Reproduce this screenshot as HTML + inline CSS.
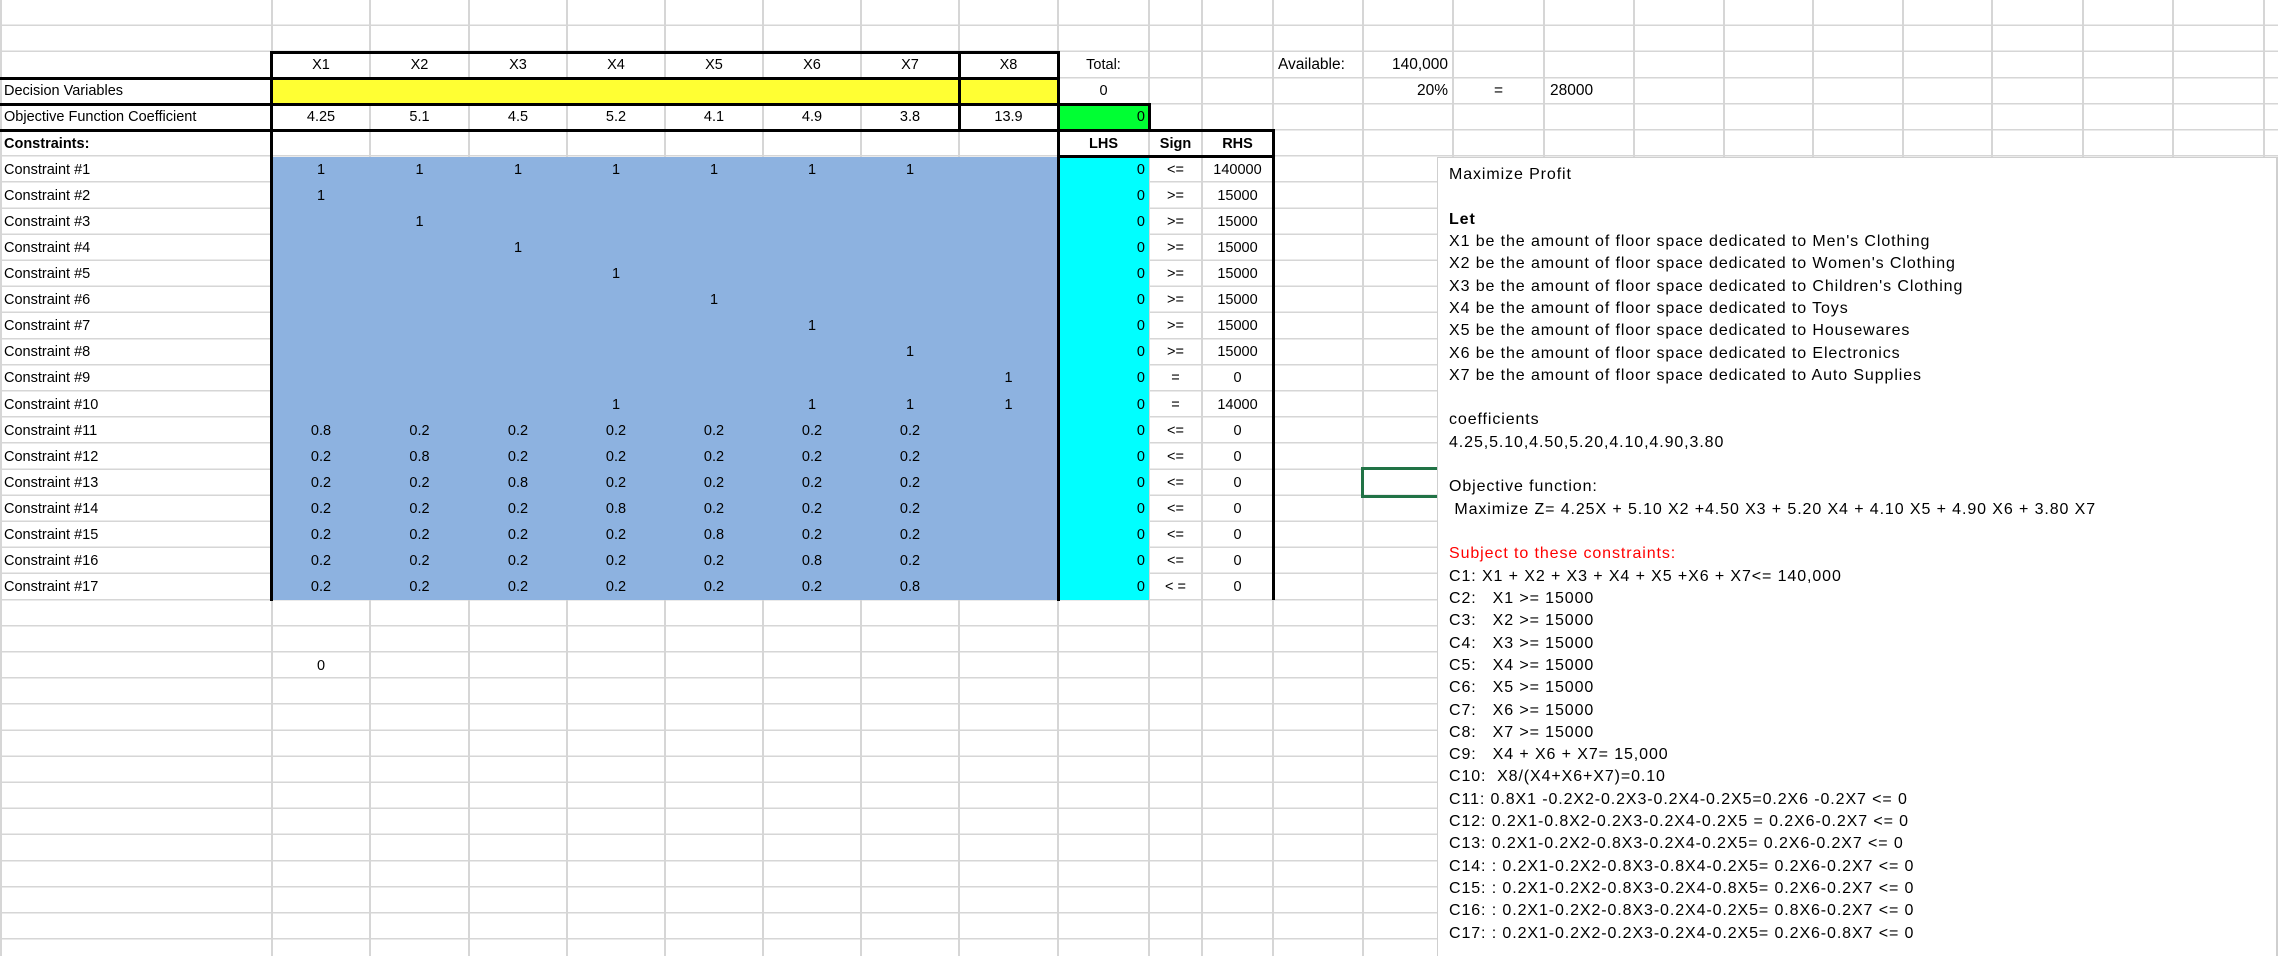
<!DOCTYPE html>
<html><head><meta charset="utf-8"><style>
*{margin:0;padding:0;box-sizing:border-box}
body{width:2278px;height:956px;position:relative;overflow:hidden;background:#fff;
background-image:repeating-linear-gradient(to bottom,transparent 0,transparent 24.6px,#d6d6d6 24.6px,#d6d6d6 26.1px);
font-family:"Liberation Sans",Arial,sans-serif;font-size:14.5px;color:#000}
.v{position:absolute;top:0;height:956px;width:2px;background:#d6d6d6}
.b{position:absolute;background:#000}
.blk{position:absolute}
.r{position:absolute;left:0;height:26.1px;display:flex;line-height:26.1px;white-space:nowrap}
.r span{display:block;text-align:center;overflow:visible}
.r span:nth-child(1){width:272px;text-align:left;padding-left:4px}
.r span:nth-child(2){width:98px}.r span:nth-child(3){width:99px}
.r span:nth-child(4){width:98px}.r span:nth-child(5){width:98px}
.r span:nth-child(6){width:98px}.r span:nth-child(7){width:98px}
.r span:nth-child(8){width:98px}.r span:nth-child(9){width:99px}
.r span:nth-child(10){width:91px;text-align:right;padding-right:4px}
.r span:nth-child(11){width:53px}.r span:nth-child(12){width:71px}
.t{position:absolute;font-size:15.5px;white-space:pre;line-height:26.1px}
#tb{position:absolute;left:1437px;top:157px;width:841px;height:799px;background:#fff;border-left:1.5px solid #cfcfcf;border-top:1.5px solid #cfcfcf;border-right:2px solid #cfcfcf}
#tx{position:absolute;left:11px;top:6px;font-size:16px;line-height:22.32px;white-space:pre;letter-spacing:0.9px}
</style></head><body>
<div class="v" style="left:0"></div>
<div class="v" style="left:271px"></div><div class="v" style="left:369px"></div><div class="v" style="left:468px"></div>
<div class="v" style="left:566px"></div><div class="v" style="left:664px"></div><div class="v" style="left:762px"></div>
<div class="v" style="left:860px"></div><div class="v" style="left:958px"></div><div class="v" style="left:1057px"></div>
<div class="v" style="left:1148px"></div><div class="v" style="left:1201px"></div><div class="v" style="left:1272px"></div>
<div class="v" style="left:1362px"></div><div class="v" style="left:1452px"></div><div class="v" style="left:1543px"></div>
<div class="v" style="left:1633px"></div><div class="v" style="left:1723px"></div><div class="v" style="left:1812px"></div>
<div class="v" style="left:1902px"></div><div class="v" style="left:1991px"></div><div class="v" style="left:2082px"></div>
<div class="v" style="left:2172px"></div><div class="v" style="left:2263px"></div>
<div style="position:absolute;left:2px;top:0;width:268px;height:52px;background:repeating-linear-gradient(to bottom,transparent 0,transparent 24.6px,#d6d6d6 24.6px,#d6d6d6 26.1px)"></div>

<div class="blk" style="left:272px;top:78px;width:786px;height:26px;background:#ffff33"></div>
<div class="blk" style="left:1058px;top:104px;width:91px;height:26px;background:#00ff33"></div>
<div class="blk" style="left:272px;top:156.6px;width:786px;height:443.7px;background:#8db2e0"></div>
<div class="blk" style="left:1058px;top:156.6px;width:91px;height:443.7px;background:#00ffff"></div>

<div class="b" style="left:270px;top:50.7px;width:789px;height:3px"></div>
<div class="b" style="left:0;top:76.8px;width:1059px;height:3px"></div>
<div class="b" style="left:0;top:102.9px;width:1150px;height:3px"></div>
<div class="b" style="left:0;top:129px;width:1275px;height:3px"></div>
<div class="b" style="left:1057px;top:155px;height:3px;width:217px"></div>
<div class="b" style="left:270px;top:50.7px;width:3px;height:550px"></div>
<div class="b" style="left:957.5px;top:50.7px;width:3px;height:81px"></div>
<div class="b" style="left:1056.5px;top:50.7px;width:3px;height:550px"></div>
<div class="b" style="left:1147.5px;top:102.9px;width:3px;height:29px"></div>
<div class="b" style="left:1271.5px;top:129px;width:3px;height:471px"></div>

<div class="r" style="top:52.2px"><span></span><span>X1</span><span>X2</span><span>X3</span><span>X4</span><span>X5</span><span>X6</span><span>X7</span><span>X8</span><span style="text-align:center;padding:0">Total:</span><span></span><span></span></div>
<div class="r" style="top:78.3px"><span>Decision Variables</span><span></span><span></span><span></span><span></span><span></span><span></span><span></span><span></span><span style="text-align:center;padding:0">0</span><span></span><span></span></div>
<div class="r" style="top:104.4px"><span>Objective Function Coefficient</span><span>4.25</span><span>5.1</span><span>4.5</span><span>5.2</span><span>4.1</span><span>4.9</span><span>3.8</span><span>13.9</span><span>0</span><span></span><span></span></div>
<div class="r" style="top:130.5px;font-weight:bold"><span>Constraints:</span><span></span><span></span><span></span><span></span><span></span><span></span><span></span><span></span><span style="text-align:center;padding:0">LHS</span><span>Sign</span><span>RHS</span></div>
<div class="r" style="top:156.6px"><span>Constraint #1</span><span>1</span><span>1</span><span>1</span><span>1</span><span>1</span><span>1</span><span>1</span><span></span><span>0</span><span>&lt;=</span><span>140000</span></div>
<div class="r" style="top:182.7px"><span>Constraint #2</span><span>1</span><span></span><span></span><span></span><span></span><span></span><span></span><span></span><span>0</span><span>&gt;=</span><span>15000</span></div>
<div class="r" style="top:208.8px"><span>Constraint #3</span><span></span><span>1</span><span></span><span></span><span></span><span></span><span></span><span></span><span>0</span><span>&gt;=</span><span>15000</span></div>
<div class="r" style="top:234.9px"><span>Constraint #4</span><span></span><span></span><span>1</span><span></span><span></span><span></span><span></span><span></span><span>0</span><span>&gt;=</span><span>15000</span></div>
<div class="r" style="top:261px"><span>Constraint #5</span><span></span><span></span><span></span><span>1</span><span></span><span></span><span></span><span></span><span>0</span><span>&gt;=</span><span>15000</span></div>
<div class="r" style="top:287.1px"><span>Constraint #6</span><span></span><span></span><span></span><span></span><span>1</span><span></span><span></span><span></span><span>0</span><span>&gt;=</span><span>15000</span></div>
<div class="r" style="top:313.2px"><span>Constraint #7</span><span></span><span></span><span></span><span></span><span></span><span>1</span><span></span><span></span><span>0</span><span>&gt;=</span><span>15000</span></div>
<div class="r" style="top:339.3px"><span>Constraint #8</span><span></span><span></span><span></span><span></span><span></span><span></span><span>1</span><span></span><span>0</span><span>&gt;=</span><span>15000</span></div>
<div class="r" style="top:365.4px"><span>Constraint #9</span><span></span><span></span><span></span><span></span><span></span><span></span><span></span><span>1</span><span>0</span><span>=</span><span>0</span></div>
<div class="r" style="top:391.5px"><span>Constraint #10</span><span></span><span></span><span></span><span>1</span><span></span><span>1</span><span>1</span><span>1</span><span>0</span><span>=</span><span>14000</span></div>
<div class="r" style="top:417.6px"><span>Constraint #11</span><span>0.8</span><span>0.2</span><span>0.2</span><span>0.2</span><span>0.2</span><span>0.2</span><span>0.2</span><span></span><span>0</span><span>&lt;=</span><span>0</span></div>
<div class="r" style="top:443.7px"><span>Constraint #12</span><span>0.2</span><span>0.8</span><span>0.2</span><span>0.2</span><span>0.2</span><span>0.2</span><span>0.2</span><span></span><span>0</span><span>&lt;=</span><span>0</span></div>
<div class="r" style="top:469.8px"><span>Constraint #13</span><span>0.2</span><span>0.2</span><span>0.8</span><span>0.2</span><span>0.2</span><span>0.2</span><span>0.2</span><span></span><span>0</span><span>&lt;=</span><span>0</span></div>
<div class="r" style="top:495.9px"><span>Constraint #14</span><span>0.2</span><span>0.2</span><span>0.2</span><span>0.8</span><span>0.2</span><span>0.2</span><span>0.2</span><span></span><span>0</span><span>&lt;=</span><span>0</span></div>
<div class="r" style="top:522px"><span>Constraint #15</span><span>0.2</span><span>0.2</span><span>0.2</span><span>0.2</span><span>0.8</span><span>0.2</span><span>0.2</span><span></span><span>0</span><span>&lt;=</span><span>0</span></div>
<div class="r" style="top:548.1px"><span>Constraint #16</span><span>0.2</span><span>0.2</span><span>0.2</span><span>0.2</span><span>0.2</span><span>0.8</span><span>0.2</span><span></span><span>0</span><span>&lt;=</span><span>0</span></div>
<div class="r" style="top:574.2px"><span>Constraint #17</span><span>0.2</span><span>0.2</span><span>0.2</span><span>0.2</span><span>0.2</span><span>0.2</span><span>0.8</span><span></span><span>0</span><span>&lt; =</span><span>0</span></div>
<div class="r" style="top:652.5px"><span></span><span>0</span></div>

<div class="t" style="left:1278px;top:52.2px">Available:</div>
<div class="t" style="left:1363px;top:52.2px;width:85px;text-align:right">140,000</div>
<div class="t" style="left:1363px;top:78.3px;width:85px;text-align:right">20%</div>
<div class="t" style="left:1453px;top:78.3px;width:91px;text-align:center">=</div>
<div class="t" style="left:1550px;top:78.3px">28000</div>

<div class="blk" style="left:1361px;top:467px;width:80px;height:31px;border:3px solid #217346"></div>

<div id="tb"><div id="tx">Maximize Profit

<b>Let</b>
X1 be the amount of floor space dedicated to Men's Clothing
X2 be the amount of floor space dedicated to Women's Clothing
X3 be the amount of floor space dedicated to Children's Clothing
X4 be the amount of floor space dedicated to Toys
X5 be the amount of floor space dedicated to Housewares
X6 be the amount of floor space dedicated to Electronics
X7 be the amount of floor space dedicated to Auto Supplies

coefficients
4.25,5.10,4.50,5.20,4.10,4.90,3.80

Objective function:
 Maximize Z= 4.25X + 5.10 X2 +4.50 X3 + 5.20 X4 + 4.10 X5 + 4.90 X6 + 3.80 X7

<span style="color:#ff0000">Subject to these constraints:</span>
C1: X1 + X2 + X3 + X4 + X5 +X6 + X7&lt;= 140,000
C2:   X1 &gt;= 15000
C3:   X2 &gt;= 15000
C4:   X3 &gt;= 15000
C5:   X4 &gt;= 15000
C6:   X5 &gt;= 15000
C7:   X6 &gt;= 15000
C8:   X7 &gt;= 15000
C9:   X4 + X6 + X7= 15,000
C10:  X8/(X4+X6+X7)=0.10
C11: 0.8X1 -0.2X2-0.2X3-0.2X4-0.2X5=0.2X6 -0.2X7 &lt;= 0
C12: 0.2X1-0.8X2-0.2X3-0.2X4-0.2X5 = 0.2X6-0.2X7 &lt;= 0
C13: 0.2X1-0.2X2-0.8X3-0.2X4-0.2X5= 0.2X6-0.2X7 &lt;= 0
C14: : 0.2X1-0.2X2-0.8X3-0.8X4-0.2X5= 0.2X6-0.2X7 &lt;= 0
C15: : 0.2X1-0.2X2-0.8X3-0.2X4-0.8X5= 0.2X6-0.2X7 &lt;= 0
C16: : 0.2X1-0.2X2-0.8X3-0.2X4-0.2X5= 0.8X6-0.2X7 &lt;= 0
C17: : 0.2X1-0.2X2-0.2X3-0.2X4-0.2X5= 0.2X6-0.8X7 &lt;= 0</div></div>
</body></html>
